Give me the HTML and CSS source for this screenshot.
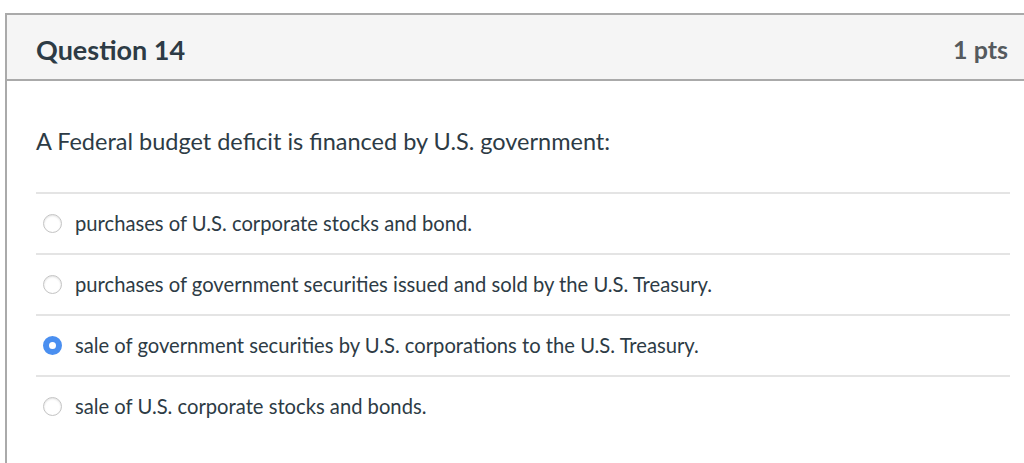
FILE: index.html
```html
<!DOCTYPE html>
<html>
<head>
<meta charset="utf-8">
<link rel="stylesheet" href="styles.css">
</head>
<body>
<div class="question">
  <div class="header">
    <span class="title">Question 14</span>
    <span class="pts">1 pts</span>
  </div>
  <div class="content">
    <p class="prompt">A Federal budget deficit is financed by U.S. government:</p>
    <div class="answers">
      <div class="answer"><span class="radio"></span><span class="label">purchases of U.S. corporate stocks and bond.</span></div>
      <div class="answer"><span class="radio"></span><span class="label">purchases of government securities issued and sold by the U.S. Treasury.</span></div>
      <div class="answer"><span class="radio checked"></span><span class="label">sale of government securities by U.S. corporations to the U.S. Treasury.</span></div>
      <div class="answer"><span class="radio"></span><span class="label">sale of U.S. corporate stocks and bonds.</span></div>
    </div>
  </div>
</div>
</body>
</html>
```
FILE: styles.css
```css
html, body {
  margin: 0;
  padding: 0;
  background: #fff;
  overflow: hidden;
}
body {
  font-family: Lato, "Open Sans", sans-serif;
  color: #2d3b45;
}
.question {
  margin: 13px 0 0 5px;
  border-top: 2px solid #aaaaaa;
  border-left: 2px solid #aaaaaa;
  height: 460px;
}
.header {
  display: flex;
  justify-content: space-between;
  align-items: center;
  height: 64px;
  padding: 0 16px 0 29px;
  background: #f5f5f5;
  border-bottom: 2px solid #aaaaaa;
}
.title {
  font-size: 27px;
  font-weight: 700;
  color: #2d3b45;
  padding-top: 4px;
}
.pts {
  font-size: 25px;
  font-weight: 700;
  color: #555a5e;
  padding-top: 4px;
}
.content {
  padding: 45px 14px 0 29px;
}
.prompt {
  margin: 0 0 34px;
  font-size: 23.5px;
  line-height: 31.5px;
}
.answer {
  display: flex;
  align-items: center;
  gap: 13px;
  height: 59px;
  border-top: 2px solid #e4e4e4;
  font-size: 20.2px;
}
.radio {
  box-sizing: border-box;
  width: 19px;
  height: 19px;
  margin-left: 7px;
  border-radius: 50%;
  border: 1px solid #c4c4c4;
  box-shadow: inset 0 1px 2px rgba(0,0,0,0.12);
  background: #fff;
  flex: none;
}
.radio.checked {
  border: 6.5px solid #4a8ff0;
  box-shadow: none;
  background: #fff;
}
```
